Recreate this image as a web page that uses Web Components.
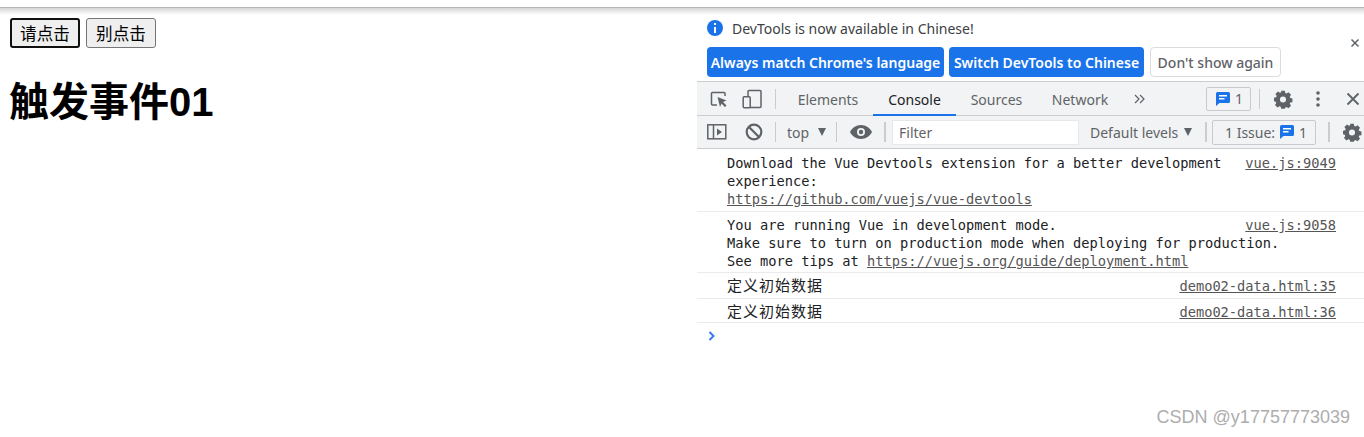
<!DOCTYPE html>
<html lang="zh">
<head>
<meta charset="utf-8">
<title>demo02-data</title>
<style>
html, body { margin: 0; padding: 0; background: #fff; height: 100%; overflow: hidden; }
</style>
</head>
<body>
<demo-page></demo-page>

<script>
const UI_FONT = `"Noto Sans", "Noto Sans CJK SC", sans-serif`;
const MONO_FONT = `"DejaVu Sans Mono", "Noto Sans CJK SC", monospace`;

const ICONS = {
    gear: `<svg viewBox="0 0 20 20" width="100%" height="100%"><path fill="#5f6368" fill-rule="evenodd" d="M8 1h4l.5 2.5 1.4.6 2.2-1.4 2.8 2.8-1.4 2.2.6 1.4 2.4.5v4l-2.4.5-.6 1.4 1.4 2.2-2.8 2.8-2.2-1.4-1.4.6L12 21H8l-.5-2.3-1.4-.6-2.2 1.4-2.8-2.8 1.4-2.2-.6-1.4L0 12.600v-4l2.400-.5.6-1.400-1.400-2.200 2.800-2.800 2.200 1.400 1.400-.6zM10 7.300a3.400 3.400 0 1 0 0 6.800 3.400 3.400 0 0 0 0-6.800z" transform="translate(1 .9) scale(.9)"/></svg>`,
    message: `<svg viewBox="0 0 14 14" width="14" height="14"><path fill="#1a73e8" d="M1.500 0h11A1.500 1.500 0 0 1 14 1.500v8a1.500 1.500 0 0 1-1.500 1.500H3.500L0 14V1.500A1.500 1.500 0 0 1 1.500 0z"/><path fill="#fff" d="M3 3h8v1.500H3zM3 6h5.500v1.500H3z"/></svg>`
};

class DemoPage extends HTMLElement {
    constructor() {
        super();
        this.attachShadow({ mode: 'open' });
        this.shadowRoot.innerHTML = `
        <style>
        :host { display: block; position: relative; width: 1364px; height: 437px; overflow: hidden; }
        .shade {
            position: absolute;
            left: 0;
            right: 0;
            top: 7px;
            height: 7px;
            border-top: 1px solid #b5b5b5;
            background: linear-gradient(#d6d6d6, rgba(255, 255, 255, 0));
        }
        .main { display: flex; height: 429px; margin-top: 8px; }
        demo-pane { width: 697px; flex: none; }
        dev-tools { flex: 1; min-width: 0; }
        .mark {
            position: absolute;
            right: 14px;
            top: 407px;
            font: 18px "Liberation Sans", sans-serif;
            color: #adadad;
            white-space: nowrap;
        }
        </style>
        <div class="main">
            <demo-pane></demo-pane>
            <dev-tools></dev-tools>
        </div>
        <div class="shade"></div>
        <div class="mark">CSDN @y17757773039</div>
        `;
    }
}

class DemoPane extends HTMLElement {
    constructor() {
        super();
        this.attachShadow({ mode: 'open' });
        this.shadowRoot.innerHTML = `
        <style>
        :host { display: block; padding: 10px 10px 0; box-sizing: border-box; font-family: "Liberation Sans", "Noto Sans CJK SC", sans-serif; }
        .buttons { display: flex; gap: 6px; }
        button {
            width: 70px;
            height: 30px;
            padding: 0;
            font: 16.6px "Liberation Sans", "Noto Sans CJK SC", sans-serif;
            color: #000;
            background: #efefef;
            border: 1px solid #767676;
            border-radius: 3px;
        }
        button.focus { border: 2px solid #101010; }
        h1 { margin: 28px 0 0 -1px; font-size: 40px; line-height: 52px; font-weight: bold; color: #000; }
        </style>
        <div class="buttons">
            <button class="focus">请点击</button>
            <button>别点击</button>
        </div>
        <h1>触发事件01</h1>
        `;
    }
}

class DevTools extends HTMLElement {
    constructor() {
        super();
        this.attachShadow({ mode: 'open' });
        this.shadowRoot.innerHTML = `
        <style>
        :host { display: flex; flex-direction: column; background: #fff; font-family: ${UI_FONT}; }
        .list { display: block; }
        .prompt { height: 26px; padding-left: 11px; display: flex; align-items: center; }
        </style>
        <info-bar></info-bar>
        <tab-bar></tab-bar>
        <console-toolbar></console-toolbar>
        <div class="list">
            <console-message source="vue.js:9049" height="63" pad="5">
                <div>Download the Vue Devtools extension for a better development</div>
                <div>experience:</div>
                <div><a>https://github.com/vuejs/vue-devtools</a></div>
            </console-message>
            <console-message source="vue.js:9058" height="61" pad="4">
                <div>You are running Vue in development mode.</div>
                <div>Make sure to turn on production mode when deploying for production.</div>
                <div>See more tips at <a>https://vuejs.org/guide/deployment.html</a></div>
            </console-message>
            <console-message source="demo02-data.html:35" height="26" pad="4"><div style="font-size:15px;letter-spacing:1px">定义初始数据</div></console-message>
            <console-message source="demo02-data.html:36" height="24" pad="4"><div style="font-size:15px;letter-spacing:1px">定义初始数据</div></console-message>
        </div>
        <div class="prompt">
            <svg width="8" height="10" viewBox="0 0 8 10"><path d="M1.500 1l4 4-4 4" fill="none" stroke="#367cf1" stroke-width="2"/></svg>
        </div>
        `;
    }
}

class InfoBar extends HTMLElement {
    constructor() {
        super();
        this.attachShadow({ mode: 'open' });
        this.shadowRoot.innerHTML = `
        <style>
        :host { display: block; height: 73px; box-sizing: border-box; padding: 11px 0 0 10px; position: relative; color: #3c4043; font: 14px ${UI_FONT}; }
        .line { display: flex; align-items: center; gap: 9px; height: 18px; }
        .actions { display: flex; gap: 5px; margin-top: 10px; }
        .btn {
            height: 30px;
            box-sizing: border-box;
            display: flex;
            align-items: center;
            justify-content: center;
            border-radius: 4px;
            font-weight: 600;
            font-size: 14px;
            white-space: nowrap;
        }
        .blue { background: #1a73e8; color: #fff; }
        .plain { background: #fff; color: #5f6368; border: 1px solid #dadce0; margin-left: 1px; font-weight: 500; }
        .close { position: absolute; right: 4px; top: 30px; width: 10px; height: 10px; }
        </style>
        <div class="line">
            <svg width="16" height="16" viewBox="0 0 16 16"><circle cx="8" cy="8" r="8" fill="#1a73e8"/><path fill="#fff" d="M7 3h2v2H7zM7 7h2v6H7z"/></svg>
            <span>DevTools is now available in Chinese!</span>
        </div>
        <div class="actions">
            <div class="btn blue" style="width:237px">Always match Chrome's language</div>
            <div class="btn blue" style="width:195px">Switch DevTools to Chinese</div>
            <div class="btn plain" style="width:131px">Don't show again</div>
        </div>
        <svg class="close" viewBox="0 0 10 10"><path d="M1.500 1.500l7 7M8.500 1.500l-7 7" stroke="#5f6368" stroke-width="1.500"/></svg>
        `;
    }
}

class TabBar extends HTMLElement {
    constructor() {
        super();
        this.attachShadow({ mode: 'open' });
        this.shadowRoot.innerHTML = `
        <style>
        :host {
            display: flex;
            align-items: center;
            height: 35px;
            box-sizing: border-box;
            background: #f1f3f4;
            border-top: 1px solid #cbcdd1;
            border-bottom: 1px solid #cbcdd1;
            color: #5f6368;
            font: 14px ${UI_FONT};
            padding-left: 13px;
        }
        .icon { flex: none; display: block; }
        .sep { width: 1px; height: 20px; background: #ccc; flex: none; }
        .tabs { display: flex; align-self: stretch; margin-left: 7px; }
        .tab { display: flex; align-items: center; justify-content: center; box-sizing: border-box; height: 34px; }
        .tab.on { color: #202124; border-bottom: 2px solid #1a73e8; padding-top: 2px; }
        .badge {
            display: flex; align-items: center; gap: 5px;
            width: 45px; height: 24px; box-sizing: border-box;
            border: 1px solid #c8cacd; border-radius: 2px;
            padding-left: 9px; flex: none; margin-left: 60px;
        }
        .gear { width: 20px; height: 20px; flex: none; }
        </style>
        <svg class="icon" width="18" height="18" viewBox="0 0 18 18" style="margin-right:14px"><path d="M7 15H2.500A1 1 0 0 1 1.500 14V3.500a1 1 0 0 1 1-1H14a1 1 0 0 1 1 1V6" fill="none" stroke="#5f6368" stroke-width="1.500"/><path fill="#5f6368" d="M7.500 7l9 3.500-3.500 1.500 3.500 3.500-1.500 1.500-3.500-3.500-1.500 3.500z"/></svg>
        <svg class="icon" width="20" height="20" viewBox="0 0 20 20" style="margin-right:13px"><path d="M6 7V2.500a1 1 0 0 1 1-1h11a1 1 0 0 1 1 1v15a1 1 0 0 1-1 1H8" fill="none" stroke="#5f6368" stroke-width="1.500"/><rect x="1.200" y="7.700" width="7" height="11" rx="1" fill="none" stroke="#5f6368" stroke-width="1.500"/></svg>
        <div class="sep"></div>
        <div class="tabs">
            <div class="tab" style="width:90px">Elements</div>
            <div class="tab on" style="width:83px">Console</div>
            <div class="tab" style="width:81px">Sources</div>
            <div class="tab" style="width:86px">Network</div>
        </div>
        <svg class="icon" width="12" height="10" viewBox="0 0 12 10" style="margin-left:11px"><path d="M1 1l4 4-4 4M6 1l4 4-4 4" fill="none" stroke="#5f6368" stroke-width="1.200"/></svg>
        <div class="badge">${ICONS.message}<span>1</span></div>
        <div class="sep" style="margin-left:8px"></div>
        <div class="gear" style="margin-left:13px">${ICONS.gear}</div>
        <svg class="icon" width="4" height="16" viewBox="0 0 4 16" style="margin-left:23px"><circle cx="2" cy="2" r="1.800" fill="#5f6368"/><circle cx="2" cy="8" r="1.800" fill="#5f6368"/><circle cx="2" cy="14" r="1.800" fill="#5f6368"/></svg>
        <svg class="icon" width="14" height="14" viewBox="0 0 14 14" style="margin-left:26px"><path d="M1.500 1.500l11 11M12.500 1.500l-11 11" stroke="#5f6368" stroke-width="1.800"/></svg>
        `;
    }
}

class ConsoleToolbar extends HTMLElement {
    constructor() {
        super();
        this.attachShadow({ mode: 'open' });
        this.shadowRoot.innerHTML = `
        <style>
        :host {
            display: flex;
            align-items: center;
            height: 33px;
            box-sizing: border-box;
            background: #f1f3f4;
            border-bottom: 1px solid #cbcdd1;
            color: #5f6368;
            font: 14px ${UI_FONT};
            padding-left: 10px;
        }
        svg { flex: none; display: block; }
        .sep { width: 1px; height: 20px; background: #ccc; flex: none; }
        .arrow { width: 0; height: 0; border: 4.500px solid transparent; border-top: 8px solid #5f6368; border-bottom: 0; flex: none; }
        .filter {
            width: 187px; height: 25px; box-sizing: border-box; flex: none;
            background: #fff; border: 1px solid #e6e8ea;
            padding-left: 6px; line-height: 23px; margin-left: 6px;
        }
        .issue {
            display: flex; align-items: center; gap: 5px;
            width: 104px; height: 25px; box-sizing: border-box; flex: none;
            border: 1px solid #c8cacd; border-radius: 2px; padding-left: 12px; margin-left: 5px;
        }
        .gear { width: 20px; height: 20px; flex: none; margin-left: 12px; }
        </style>
        <svg width="20" height="18" viewBox="0 0 20 18"><rect x=".8" y="1.800" width="18" height="14" fill="none" stroke="#5f6368" stroke-width="1.500"/><path d="M6.500 2v14" stroke="#5f6368" stroke-width="1.500"/><path fill="#5f6368" d="M10 5.500l5 3.500-5 3.500z"/></svg>
        <svg width="18" height="18" viewBox="0 0 18 18" style="margin-left:18px"><circle cx="9" cy="9" r="7.300" fill="none" stroke="#5f6368" stroke-width="2.200"/><path d="M4 4l10 10" stroke="#5f6368" stroke-width="2.200"/></svg>
        <div class="sep" style="margin-left:12px"></div>
        <span style="margin-left:11px;width:23px">top</span>
        <div class="arrow" style="margin-left:8px"></div>
        <div class="sep" style="margin-left:10px"></div>
        <svg width="22" height="14" viewBox="0 0 22 14" style="margin-left:13px"><path fill="#5f6368" fill-rule="evenodd" d="M11 0c5 0 9 3 11 7-2 4-6 7-11 7S2 11 0 7c2-4 6-7 11-7zm0 3a4 4 0 1 0 0 8 4 4 0 0 0 0-8z"/><circle cx="11" cy="7" r="2.200" fill="#5f6368"/></svg>
        <div class="sep" style="margin-left:12px;width:2px"></div>
        <div class="filter">Filter</div>
        <span style="margin-left:11px;width:88px;white-space:nowrap">Default levels</span>
        <div class="arrow" style="margin-left:6px"></div>
        <div class="sep" style="margin-left:13px;width:2px"></div>
        <div class="issue"><span>1 Issue:</span>${ICONS.message}<span>1</span></div>
        <div class="sep" style="margin-left:12px;width:2px"></div>
        <div class="gear">${ICONS.gear}</div>
        `;
    }
}

class ConsoleMessage extends HTMLElement {
    constructor() {
        super();
        this.attachShadow({ mode: 'open' });
        this.shadowRoot.innerHTML = `
        <style>
        :host {
            display: block;
            box-sizing: border-box;
            border-bottom: 1px solid #ebebeb;
            padding: 5px 28px 0 30px;
            font: 13.7px/18px ${MONO_FONT};
            color: #202124;
            position: relative;
        }
        .text { white-space: nowrap; }
        ::slotted(div) { white-space: nowrap; }
        .source { float: right; color: #555; text-decoration: underline; white-space: nowrap; margin-left: 24px; }
        </style>
        <div class="source"></div>
        <div class="text"><slot></slot></div>
        `;
    }

    connectedCallback() {
        this.shadowRoot.querySelector('.source').textContent = this.getAttribute('source');
        this.style.height = this.getAttribute('height') + 'px';
        this.style.paddingTop = this.getAttribute('pad') + 'px';
        this.querySelectorAll('a').forEach((link) => {
            link.style.color = '#555';
            link.style.textDecoration = 'underline';
        });
    }
}

customElements.define('demo-page', DemoPage);
customElements.define('demo-pane', DemoPane);
customElements.define('dev-tools', DevTools);
customElements.define('info-bar', InfoBar);
customElements.define('tab-bar', TabBar);
customElements.define('console-toolbar', ConsoleToolbar);
customElements.define('console-message', ConsoleMessage);
</script>
</body>
</html>
